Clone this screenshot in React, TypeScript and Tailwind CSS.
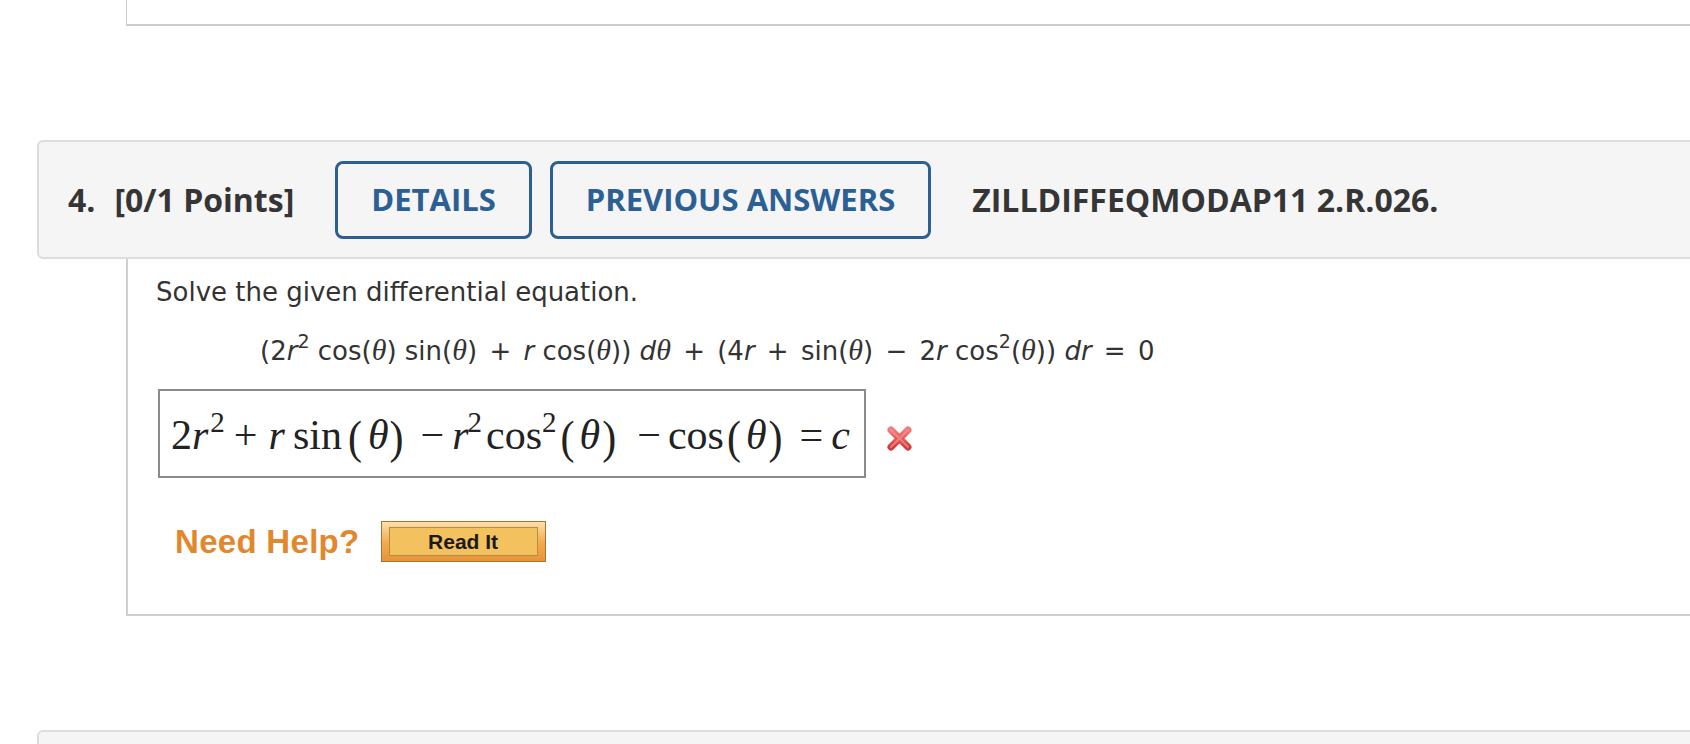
import React from "react";

const Th = () => (
  <span className="italic font-['Liberation_Serif',serif] text-[30px]">θ</span>
);
const I = ({ children }: { children: React.ReactNode }) => (
  <span className="italic">{children}</span>
);
const Sup = ({ children }: { children: React.ReactNode }) => (
  <span className="text-[19px] relative top-[-12px]">{children}</span>
);
const Op = ({ children }: { children: React.ReactNode }) => (
  <span className="mx-[4px]">{children}</span>
);

type C = { children: React.ReactNode; cls?: string };
const MI = ({ children, cls = "" }: C) => (
  <span className={"inline-block italic " + cls}>{children}</span>
);
const MN = ({ children, cls = "" }: C) => (
  <span className={"inline-block " + cls}>{children}</span>
);
const MS = ({ children, cls = "" }: C) => (
  <span className={"inline-block text-[29px] relative top-[-17px] " + cls}>{children}</span>
);
const P = ({ children, cls = "" }: C) => (
  <span className={"inline-block scale-y-[1.1] translate-y-[3px] " + cls}>{children}</span>
);

export default function App() {
  return (
    <div className="w-[1690px] h-[744px] overflow-hidden bg-white">
      {/* previous question body (bottom edge) */}
      <div className="ml-[126px] mr-[-20px] h-[26px] border-l border-b-2 border-[#cccccc]" />

      <div className="h-[114px]" />

      {/* question header */}
      <div className="ml-[37px] mr-[-20px] h-[119px] rounded-[6px] border-2 border-[#dddddd] bg-[#f5f5f5] flex items-center pl-[29px] font-['Open_Sans',sans-serif] font-bold text-[32px] text-[#353535]">
        <span>4.</span>
        <span className="ml-[19px]">[0/1 Points]</span>
        <div className="ml-[41px] h-[78px] px-[33px] rounded-[8px] border-[3px] border-[#2c5f94] flex items-center text-[#2c5f94] text-[31px]">
          DETAILS
        </div>
        <div className="ml-[18px] h-[78px] px-[33px] rounded-[8px] border-[3px] border-[#2c5f94] flex items-center text-[#2c5f94] text-[31px]">
          PREVIOUS ANSWERS
        </div>
        <span className="ml-[41px]">ZILLDIFFEQMODAP11 2.R.026.</span>
      </div>

      {/* question body */}
      <div className="ml-[126px] mr-[-20px] h-[357px] border-l-2 border-b-2 border-[#cfcfcf] pl-[28px] pt-[18px] font-['DejaVu_Sans',Verdana,sans-serif] text-[#333333]">
        <div className="text-[26px] leading-[30px]">Solve the given differential equation.</div>
        <div className="ml-[104px] mt-[28px] text-[26px] leading-[30px] whitespace-pre">
          (2<I>r</I><Sup>2</Sup> cos(<Th />) sin(<Th />) <Op>+</Op> <I>r</I> cos(<Th />)) <I>d</I><Th /> <Op>+</Op> (4<I>r</I> <Op>+</Op> sin(<Th />) <Op>−</Op> 2<I>r</I> cos<Sup>2</Sup>(<Th />)) <I>dr</I> <Op>=</Op> 0
        </div>

        <div className="mt-[21px] flex items-center">
          <div className="ml-[2px] w-[708px] h-[89px] border-2 border-[#8a8a8a] pl-[11px] flex items-center">
            <div className="font-['Liberation_Serif',serif] text-[42px] leading-[42px] text-[#222] whitespace-pre pt-[6px]">
              <MN>2</MN>
              <MI>r</MI>
              <MS cls="ml-[2px]">2</MS>
              <MN cls="ml-[9px]">+</MN>
              <MI cls="ml-[11px]">r</MI>
              <MN cls="ml-[8px]">sin</MN>
              <P cls="ml-[6px]">(</P>
              <MI cls="ml-[6px]">θ</MI>
              <P cls="ml-[1px]">)</P>
              <MN cls="ml-[17px]">−</MN>
              <MI cls="ml-[8px]">r</MI>
              <MS cls="ml-[-1px]">2</MS>
              <MN cls="ml-[4px]">cos</MN>
              <MS>2</MS>
              <P cls="ml-[4px]">(</P>
              <MI cls="ml-[5px]">θ</MI>
              <P cls="ml-[2px]">)</P>
              <MN cls="ml-[21px]">−</MN>
              <MN cls="ml-[7px]">cos</MN>
              <P cls="ml-[3px]">(</P>
              <MI cls="ml-[5px]">θ</MI>
              <P cls="ml-[2px]">)</P>
              <MN cls="ml-[17px]">=</MN>
              <MI cls="ml-[8px]">c</MI>
            </div>
          </div>
          <svg className="ml-[20px] mt-[10px]" width="27" height="27" viewBox="0 0 27 27">
            <defs>
              <linearGradient id="xg" x1="0" y1="0" x2="0" y2="1">
                <stop offset="0" stopColor="#f27a7a" />
                <stop offset="1" stopColor="#d63a3a" />
              </linearGradient>
            </defs>
            <path d="M5 5 L22 22 M22 5 L5 22" stroke="url(#xg)" strokeWidth="7" strokeLinecap="round" fill="none" />
            <path d="M5 5 L22 22 M22 5 L5 22" stroke="#f3a0a0" strokeWidth="2" strokeLinecap="round" fill="none" opacity="0.6" />
          </svg>
        </div>

        <div className="mt-[39px] flex items-center">
          <span className="ml-[19px] font-['Liberation_Sans',Arial,sans-serif] font-bold text-[33px] text-[#e2872c] tracking-[0.3px]">
            Need Help?
          </span>
          <div className="ml-[21px] w-[165px] h-[41px] border border-[#a8742f] bg-gradient-to-b from-[#fbe0ad] via-[#f2ad4e] to-[#e8923a] px-[7px] py-[5px]">
            <div className="h-full border border-[#b58c45] bg-[#f3c25f] flex items-center justify-center font-['Liberation_Sans',Arial,sans-serif] font-bold text-[21px] text-[#1a1a1a]">
              Read It
            </div>
          </div>
        </div>
      </div>

      <div className="h-[114px]" />

      {/* next question header */}
      <div className="ml-[37px] mr-[-20px] h-[60px] rounded-[6px] border-2 border-[#dddddd] bg-[#f5f5f5]" />
    </div>
  );
}
